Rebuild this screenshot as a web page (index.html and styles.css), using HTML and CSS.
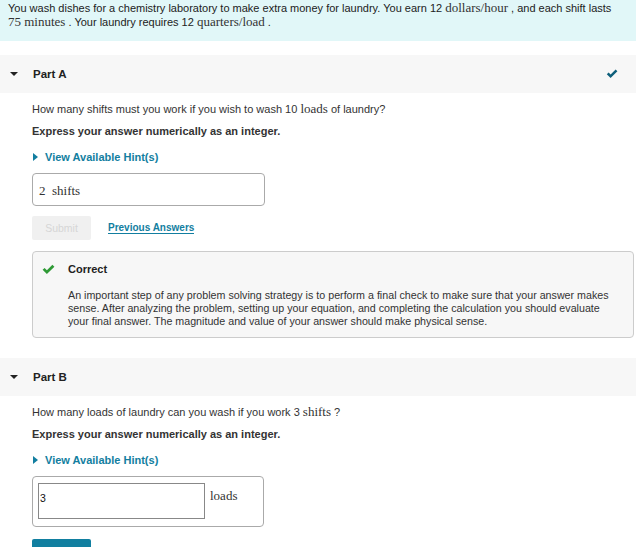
FILE: index.html
```html
<!DOCTYPE html>
<html>
<head>
<meta charset="utf-8">
<link rel="stylesheet" href="styles.css">
</head>
<body>
<div class="intro">You wash dishes for a chemistry laboratory to make extra money for laundry. You earn 12 <span class="m">dollars/hour</span> , and each shift lasts <span class="m">75 minutes</span> . Your laundry requires 12 <span class="m">quarters/load</span> .</div>

<section class="part">
  <div class="part-head">
    <span class="caret"></span>
    <span class="part-title">Part A</span>
    <svg class="hcheck" width="12" height="10" viewBox="0 0 12 10"><path d="M0.8 5.2 L2.6 3.6 L4.6 5.6 L9.6 0.6 L11.4 2.3 L4.6 9 Z" fill="#0e5f7b"/></svg>
  </div>
  <div class="part-body">
    <p class="q">How many shifts must you work if you wish to wash 10 <span class="m">loads</span> of laundry?</p>
    <p class="instr">Express your answer numerically as an integer.</p>
    <div class="hint"><span class="tri"></span>View Available Hint(s)</div>
    <div class="answer-box"><span class="m ans">2 &nbsp;shifts</span></div>
    <div class="actions">
      <span class="btn btn-disabled">Submit</span>
      <span class="prev">Previous Answers</span>
    </div>
    <div class="feedback">
      <div class="fb-head">
        <svg class="gcheck" width="13" height="11" viewBox="0 0 13 11"><path d="M0.6 5.8 L2.6 4 L4.9 6.3 L10.4 0.8 L12.4 2.7 L4.9 10 Z" fill="#2f9a36"/></svg>
        <span class="fb-title">Correct</span>
      </div>
      <p class="fb-text">An important step of any problem solving strategy is to perform a final check to make sure that your answer makes sense. After analyzing the problem, setting up your equation, and completing the calculation you should evaluate your final answer. The magnitude and value of your answer should make physical sense.</p>
    </div>
  </div>
</section>

<section class="part">
  <div class="part-head">
    <span class="caret"></span>
    <span class="part-title">Part B</span>
  </div>
  <div class="part-body">
    <p class="q">How many loads of laundry can you wash if you work 3 <span class="m">shifts</span> ?</p>
    <p class="instr">Express your answer numerically as an integer.</p>
    <div class="hint"><span class="tri"></span>View Available Hint(s)</div>
    <div class="answer-box2">
      <div class="inbox">3</div>
      <span class="m unit">loads</span>
    </div>
    <div class="actions actions-b">
      <span class="btn btn-primary">Submit</span>
    </div>
  </div>
</section>
</body>
</html>
```

FILE: styles.css
```css
html, body {
  margin: 0;
  padding: 0;
  background: #ffffff;
}
body {
  font-family: "Liberation Sans", Arial, sans-serif;
  font-size: 11px;
  color: #222;
  width: 636px;
  overflow: hidden;
}
.m {
  font-family: "Liberation Serif", "Times New Roman", serif;
  font-size: 13px;
  color: #333;
  white-space: nowrap;
}
.intro {
  background: #e1f7f8;
  padding: 1px 8px 0 8px;
  line-height: 14px;
  height: 41px;
  box-sizing: border-box;
  margin-bottom: 14px;
}
.part-head {
  background: #f7f7f7;
  height: 38px;
  display: flex;
  align-items: center;
}
.caret {
  width: 0;
  height: 0;
  border-left: 4px solid transparent;
  border-right: 4px solid transparent;
  border-top: 4px solid #222;
  margin-left: 10px;
  margin-right: 15px;
}
.part-title {
  font-weight: bold;
  font-size: 11.5px;
  color: #222;
}
.hcheck {
  margin-left: auto;
  margin-right: 18px;
}
.part-body {
  padding: 8px 0 0 32px;
}
.q {
  margin: 0;
  line-height: 16px;
  color: #333;
}
.instr {
  margin: 6px 0 0 0;
  font-weight: bold;
  line-height: 16px;
  color: #333;
}
.hint {
  margin-top: 10px;
  display: flex;
  align-items: center;
  font-weight: bold;
  color: #127ea0;
  line-height: 16px;
}
.tri {
  width: 0;
  height: 0;
  border-top: 4px solid transparent;
  border-bottom: 4px solid transparent;
  border-left: 5px solid #127ea0;
  margin-left: 1px;
  margin-right: 7px;
}
.answer-box {
  margin-top: 8px;
  height: 31px;
  width: 225px;
  border: 1px solid #aaa;
  border-radius: 4px;
  display: flex;
  align-items: center;
  padding-left: 6px;
}
.ans {
  color: #333;
  padding-top: 2px;
}
.actions {
  display: flex;
  align-items: center;
  margin-top: 10px;
  gap: 17px;
}
.actions-b {
  margin-top: 12px;
}
.btn {
  display: inline-flex;
  align-items: center;
  justify-content: center;
  width: 59px;
  height: 24px;
  font-size: 10.5px;
  border-radius: 2px;
}
.btn-disabled {
  background: #f0f0f0;
  color: #d6d6d6;
}
.btn-primary {
  background: #117fa0;
  color: #fff;
}
.prev {
  font-weight: bold;
  font-size: 10px;
  color: #127ea0;
  border-bottom: 1px solid #127ea0;
  line-height: 11px;
}
.feedback {
  margin-top: 11px;
  background: #f7f7f7;
  border: 1px solid #cccccc;
  border-radius: 4px;
  margin-right: 2px;
  padding: 11px 10px 0 9px;
  height: 74px;
}
.fb-head {
  display: flex;
  align-items: center;
}
.gcheck {
  margin-right: 13px;
}
.fb-title {
  font-weight: bold;
  font-size: 11px;
  color: #222;
}
.fb-text {
  margin: 14px 0 0 26px;
  font-size: 10.7px;
  line-height: 13px;
  color: #333;
}
.part + .part {
  margin-top: 20px;
}
.answer-box2 {
  margin-top: 8px;
  width: 232px;
  height: 51px;
  border: 1px solid #aaa;
  border-radius: 4px;
  display: flex;
  align-items: flex-start;
  padding: 6px 0 0 5px;
  box-sizing: border-box;
}
.inbox {
  width: 167px;
  height: 36px;
  border: 1px solid #888;
  box-sizing: border-box;
  padding: 8px 0 0 1px;
  color: #111;
  font-size: 10.5px;
}
.unit {
  margin-left: 5px;
  margin-top: 5px;
}
```
